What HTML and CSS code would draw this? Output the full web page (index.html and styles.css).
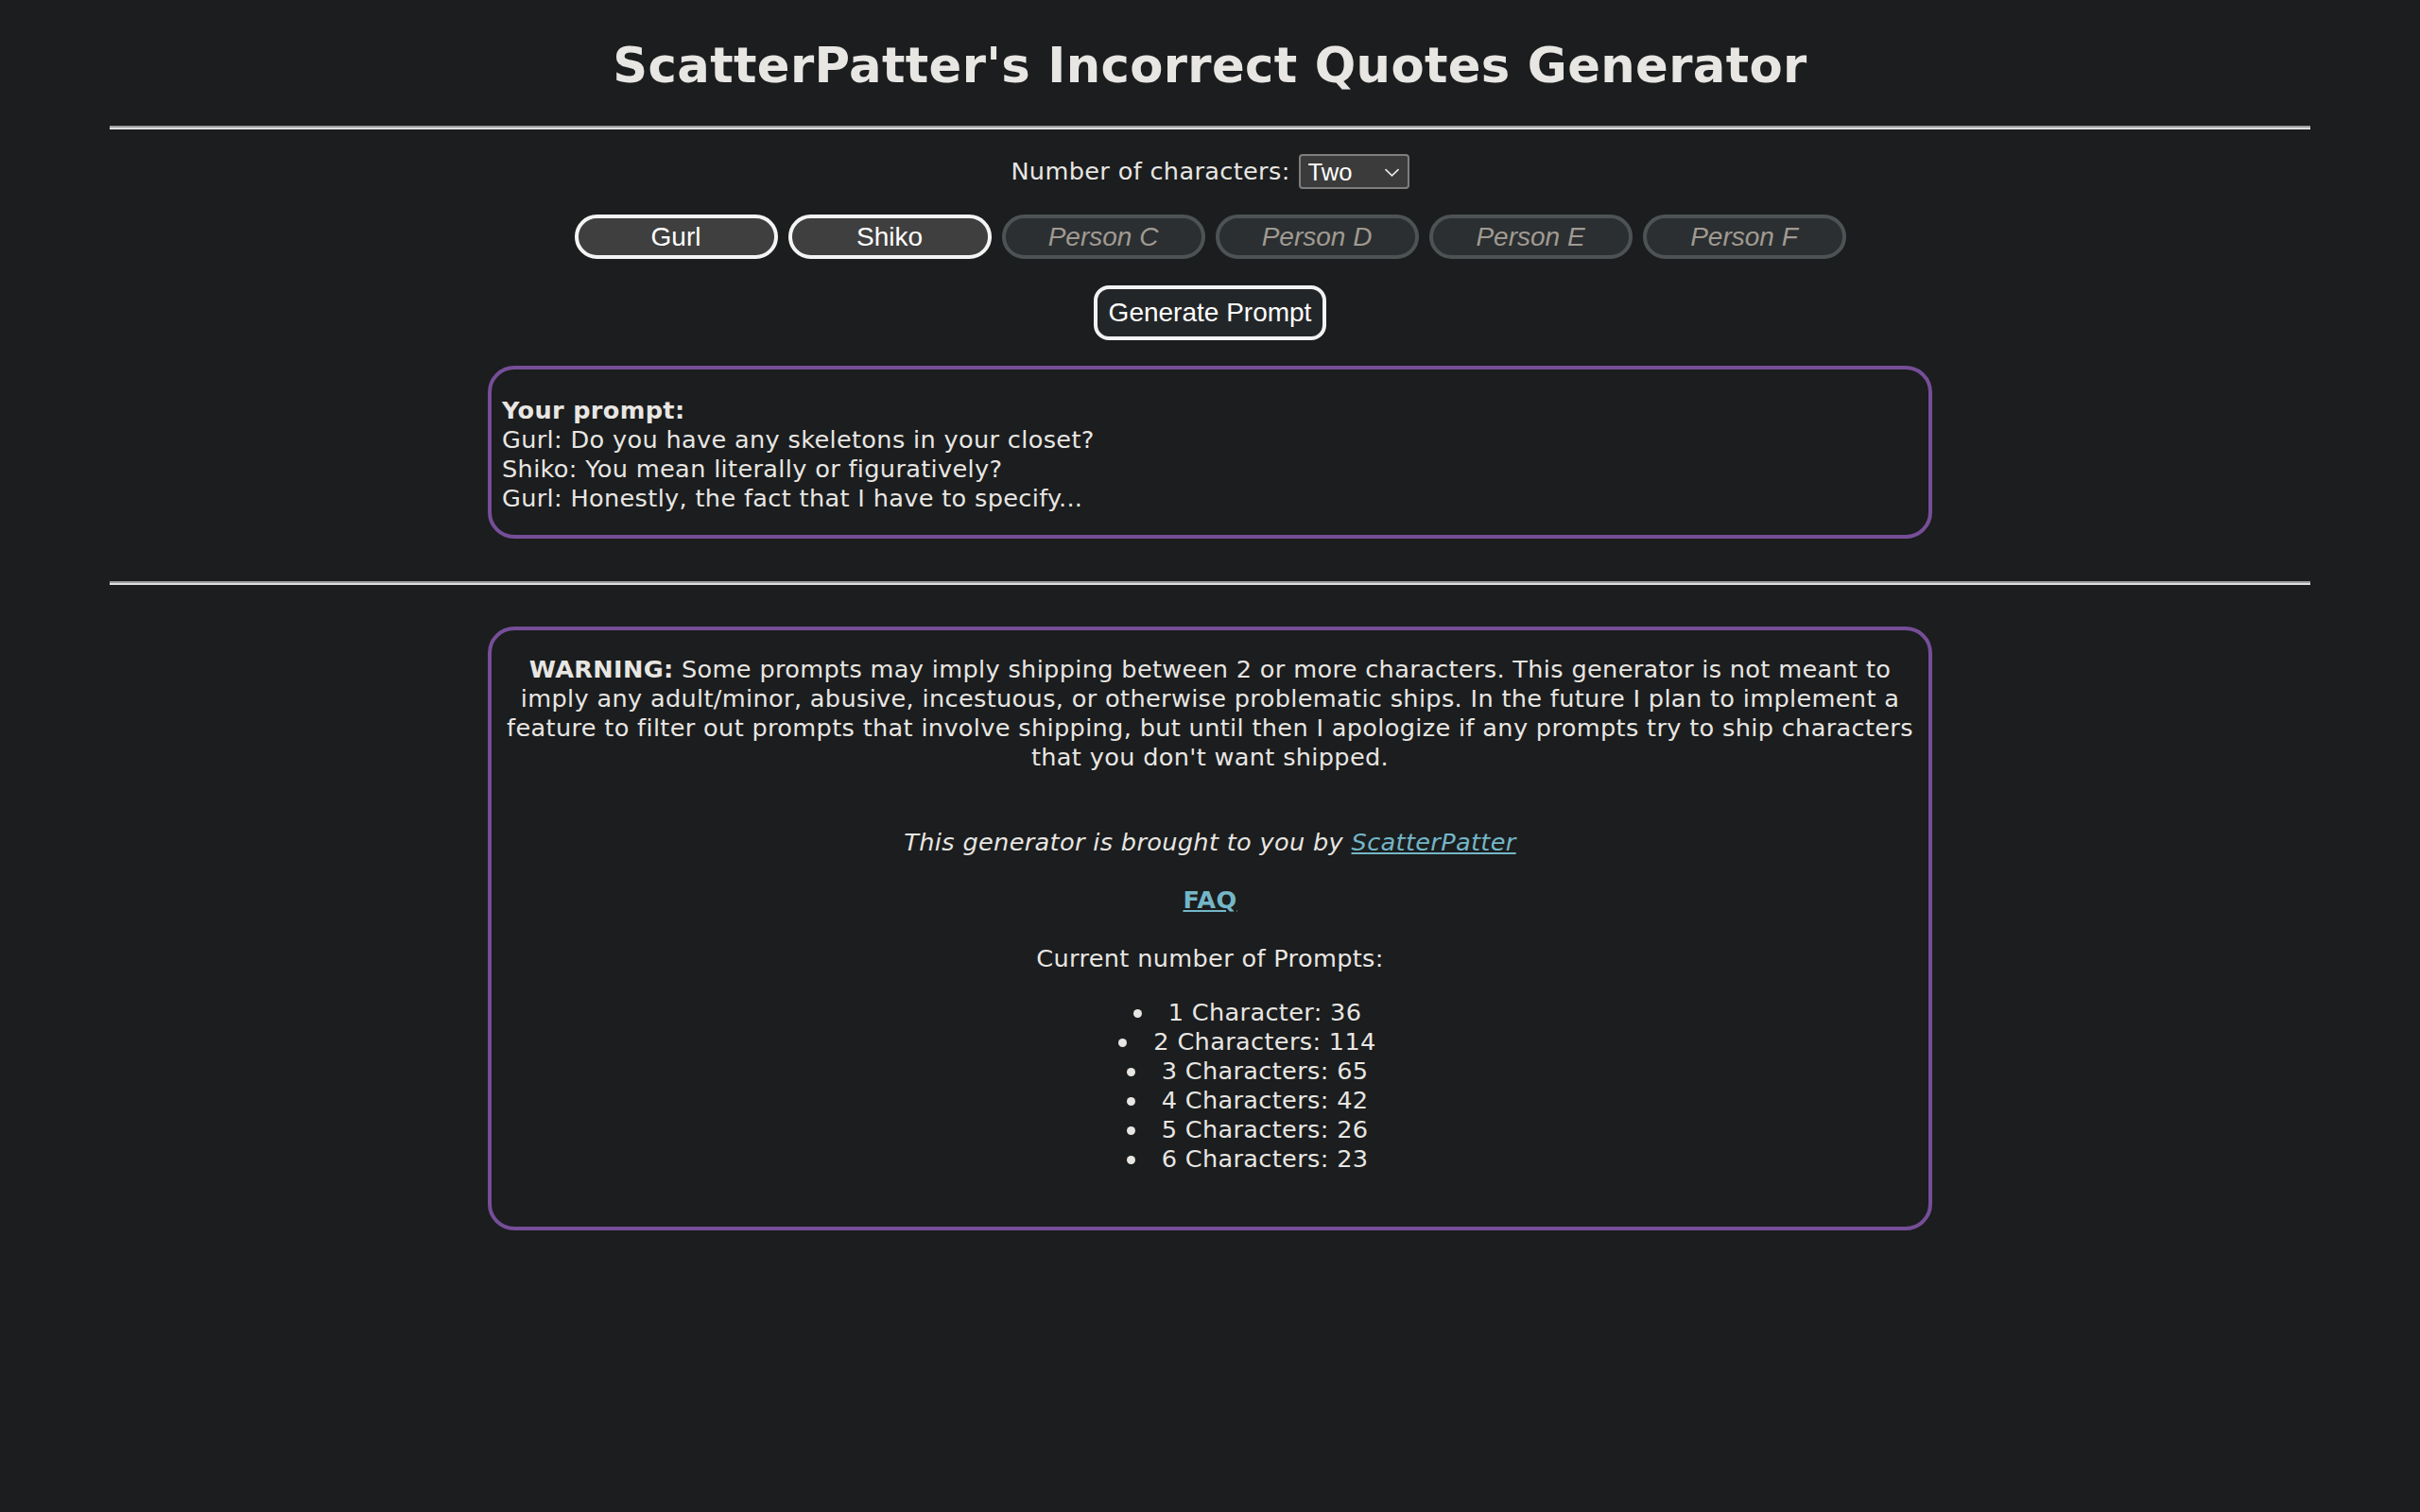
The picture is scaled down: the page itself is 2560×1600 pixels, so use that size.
FILE: index.html
```html
<!DOCTYPE html>
<html lang="en">
<head>
<meta charset="utf-8">
<title>ScatterPatter's Incorrect Quotes Generator</title>
<link rel="stylesheet" href="styles.css">
</head>
<body>
<main class="page">
  <h1 class="title">ScatterPatter's Incorrect Quotes Generator</h1>
  <hr class="rule rule-top">
  <div class="count-row">
    <label class="count-label" for="count">Number of characters:</label>
    <span class="select-wrap">
      <select id="count" class="count-select">
        <option>One</option>
        <option selected>Two</option>
        <option>Three</option>
        <option>Four</option>
        <option>Five</option>
        <option>Six</option>
      </select>
      <svg class="chevron" viewBox="0 0 17 9" aria-hidden="true"><path d="M1.5 1.2 L8.5 7.8 L15.5 1.2" fill="none" stroke="#e6e6e6" stroke-width="1.7"/></svg>
    </span>
  </div>
  <div class="char-row">
    <button class="char">Gurl</button>
    <button class="char">Shiko</button>
    <button class="char off">Person C</button>
    <button class="char off">Person D</button>
    <button class="char off">Person E</button>
    <button class="char off">Person F</button>
  </div>
  <button class="gen-btn">Generate Prompt</button>
  <section class="box prompt-box">
    <p class="prompt"><b>Your prompt:</b><br>Gurl: Do you have any skeletons in your closet?<br>Shiko: You mean literally or figuratively?<br>Gurl: Honestly, the fact that I have to specify...</p>
  </section>
  <hr class="rule rule-mid">
  <section class="box info-box">
    <p class="warning"><b>WARNING:</b> Some prompts may imply shipping between 2 or more characters. This generator is not meant to<br>imply any adult/minor, abusive, incestuous, or otherwise problematic ships. In the future I plan to implement a<br>feature to filter out prompts that involve shipping, but until then I apologize if any prompts try to ship characters<br>that you don't want shipped.</p>
    <p class="credit"><i>This generator is brought to you by <a href="#">ScatterPatter</a></i></p>
    <p class="faq"><a href="#"><b>FAQ</b></a></p>
    <p class="count-title">Current number of Prompts:</p>
    <ul class="count-list">
      <li>1 Character: 36</li>
      <li>2 Characters: 114</li>
      <li>3 Characters: 65</li>
      <li>4 Characters: 42</li>
      <li>5 Characters: 26</li>
      <li>6 Characters: 23</li>
    </ul>
  </section>
</main>
</body>
</html>
```
FILE: styles.css
```css
* { box-sizing: border-box; }
html, body { margin: 0; padding: 0; background: #1b1d1e; }
body {
  color: #e8e6e3;
  font-family: "DejaVu Sans", Verdana, sans-serif;
  font-size: 25.6px;
  line-height: 31px;
  letter-spacing: 0.33px;
  min-height: 1600px;
}
.page { display: flex; flex-direction: column; align-items: center; }
.title {
  margin: 38px 0 0;
  font-size: 51.2px;
  line-height: 62px;
  font-weight: bold;
  letter-spacing: 0.36px;
  text-align: center;
}
.rule {
  width: 2328px;
  height: 4px;
  margin: 0;
  border: 0;
  border-top: 2px solid #9d9d9d;
  border-bottom: 2px solid #dedede;
}
.rule-top { margin-top: 33px; }
.rule-mid { margin-top: 45px; }
.count-row { margin-top: 26px; display: flex; align-items: center; gap: 9px; height: 37px; }
.select-wrap { position: relative; display: block; width: 117px; height: 37px; }
.count-select {
  appearance: none;
  -webkit-appearance: none;
  display: block;
  width: 117px;
  height: 37px;
  margin: 0;
  padding: 0 0 0 8px;
  border: 2px solid #7e7e7e;
  border-radius: 4px;
  background: #3b3b3b;
  color: #ffffff;
  font-family: "Liberation Sans", Arial, sans-serif;
  font-size: 25.6px;
  letter-spacing: 0;
}
.chevron { position: absolute; left: 90px; top: 15px; width: 17px; height: 9px; pointer-events: none; }
.char-row { margin-top: 27px; display: flex; gap: 11px; }
.char {
  width: 215px;
  height: 47px;
  padding: 0;
  border: 4px solid #f4f4f4;
  border-radius: 24px;
  background: #3f3f3f;
  color: #ffffff;
  font-family: "Liberation Sans", Arial, sans-serif;
  font-size: 28px;
  letter-spacing: 0;
}
.char.off { border-color: #4d5355; background: #2b2f31; color: #a09a92; font-style: italic; }
.gen-btn {
  margin-top: 28px;
  height: 58px;
  padding: 0 12px;
  border: 4px solid #f2f2f2;
  border-radius: 16px;
  background: #232628;
  color: #ffffff;
  font-family: "Liberation Sans", Arial, sans-serif;
  font-size: 28px;
  letter-spacing: 0;
}
.box { width: 1528px; border: 4px solid #764e98; border-radius: 28px; padding: 0 11px; }
.prompt-box { margin-top: 27px; padding-top: 28px; padding-bottom: 23px; }
.prompt { margin: 0; }
.info-box { margin-top: 44px; padding-top: 26px; padding-bottom: 56px; text-align: center; }
.info-box p { margin: 0; }
.info-box .credit { margin-top: 59px; }
.info-box .faq { margin-top: 30px; }
.info-box .count-title { margin-top: 31px; }
a { color: #74b6c8; text-decoration: underline; }
.count-list { list-style: none; margin: 26px 0 0; padding: 0 0 0 79px; }
.count-list li::before {
  content: "";
  display: inline-block;
  width: 9px;
  height: 9px;
  border-radius: 50%;
  background: currentColor;
  margin-right: 28px;
  vertical-align: 3px;
}
```
